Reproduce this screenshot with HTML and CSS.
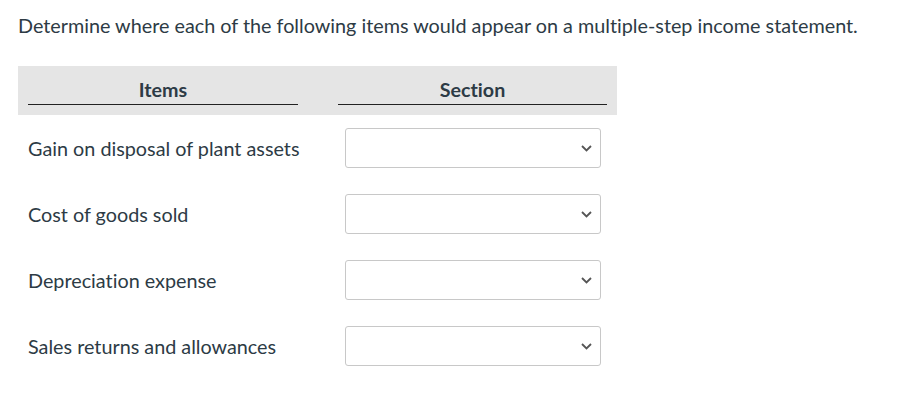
FILE: index.html
```html
<!DOCTYPE html>
<html>
<head>
<meta charset="utf-8">
<link rel="stylesheet" href="styles.css">
</head>
<body>
<p class="prompt">Determine where each of the following items would appear on a multiple-step income statement.</p>
<div class="table">
  <div class="head">
    <div class="hcell">Items</div>
    <div class="hcell">Section</div>
  </div>
  <div class="row">
    <div class="label">Gain on disposal of plant assets</div>
    <div class="sel"><span class="chev"><svg width="11" height="7" viewBox="0 0 11 7"><path d="M1 1 L5.5 5.5 L10 1" fill="none" stroke="#555" stroke-width="1.8"/></svg></span></div>
  </div>
  <div class="row">
    <div class="label">Cost of goods sold</div>
    <div class="sel"><span class="chev"><svg width="11" height="7" viewBox="0 0 11 7"><path d="M1 1 L5.5 5.5 L10 1" fill="none" stroke="#555" stroke-width="1.8"/></svg></span></div>
  </div>
  <div class="row">
    <div class="label">Depreciation expense</div>
    <div class="sel"><span class="chev"><svg width="11" height="7" viewBox="0 0 11 7"><path d="M1 1 L5.5 5.5 L10 1" fill="none" stroke="#555" stroke-width="1.8"/></svg></span></div>
  </div>
  <div class="row">
    <div class="label">Sales returns and allowances</div>
    <div class="sel"><span class="chev"><svg width="11" height="7" viewBox="0 0 11 7"><path d="M1 1 L5.5 5.5 L10 1" fill="none" stroke="#555" stroke-width="1.8"/></svg></span></div>
  </div>
</div>
</body>
</html>
```
FILE: styles.css
```css
* { box-sizing: border-box; }
body {
  margin: 0;
  padding: 0 0 0 18px;
  background: #fff;
  font-family: Lato, "Liberation Sans", sans-serif;
  color: #2d3b45;
  font-variant-ligatures: none;
}
.prompt {
  margin: 0;
  padding-top: 12px;
  font-size: 19.8px;
  line-height: 26px;
}
.table {
  width: 599px;
  margin-top: 28px;
}
.head {
  background: #e5e5e5;
  display: grid;
  grid-template-columns: 270px 269px;
  column-gap: 40px;
  padding: 0 10px;
  height: 49px;
}
.hcell {
  font-weight: bold;
  font-size: 19.7px;
  text-align: center;
  border-bottom: 1px solid #222;
  height: 39px;
  padding-top: 12px;
  line-height: 24px;
}
.row {
  display: grid;
  grid-template-columns: 270px 269px;
  column-gap: 40px;
  padding: 0 10px;
  height: 66px;
  align-items: center;
}
.label {
  font-size: 19.8px;
  line-height: 24px;
  white-space: nowrap;
}
.sel {
  margin-left: 7px;
  width: 256px;
  height: 40px;
  border: 1px solid #c8c8c8;
  border-radius: 3px;
  display: flex;
  align-items: center;
  justify-content: flex-end;
  padding-right: 8px;
}
.chev { display: flex; }
```
